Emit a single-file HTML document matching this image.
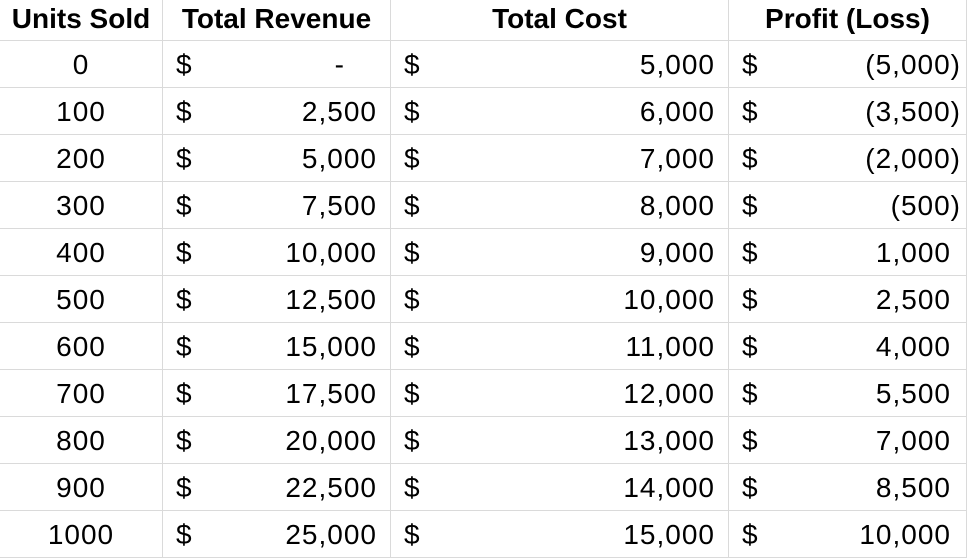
<!DOCTYPE html><html><head><style>
body{margin:0;width:967px;height:558px;background:#fff;overflow:hidden;position:relative;font-family:"Liberation Sans",sans-serif;font-size:28px;color:#000}
.v{position:absolute;top:0;width:1px;height:558px;background:#dadada}
.h{position:absolute;left:0;height:1px;width:967px;background:#dadada}
.t{position:absolute;white-space:nowrap;line-height:32px}
.n{letter-spacing:1px}
.b{font-weight:bold}
</style></head><body>
<div class="v" style="left:162px"></div><div class="v" style="left:390px"></div><div class="v" style="left:728px"></div><div class="v" style="left:966px"></div>
<div id="g"></div>
<div class="t b" style="left:0;width:162px;text-align:center;top:3px">Units Sold</div>
<div class="t b" style="left:163px;width:227px;text-align:center;top:3px">Total Revenue</div>
<div class="t b" style="left:391px;width:337px;text-align:center;top:3px">Total Cost</div>
<div class="t b" style="left:729px;width:237px;text-align:center;top:3px">Profit (Loss)</div>
<script>
var u=["0","100","200","300","400","500","600","700","800","900","1000"],
r=["-","2,500","5,000","7,500","10,000","12,500","15,000","17,500","20,000","22,500","25,000"],
c=["5,000","6,000","7,000","8,000","9,000","10,000","11,000","12,000","13,000","14,000","15,000"],
p=["(5,000)","(3,500)","(2,000)","(500)","1,000","2,500","4,000","5,500","7,000","8,500","10,000"],h="";
for(var i=0;i<=11;i++)h+='<div class="h" style="top:'+(40+47*i)+'px"></div>';
for(i=0;i<11;i++){var y=49+47*i;
h+='<div class="t n" style="left:0;width:162px;text-align:center;top:'+y+'px">'+u[i]+'</div>';
h+='<div class="t" style="left:176px;top:'+y+'px">$</div>';
h+='<div class="t n" style="right:'+(967-(i==0?345:377))+'px;top:'+y+'px">'+r[i]+'</div>';
h+='<div class="t" style="left:404px;top:'+y+'px">$</div>';
h+='<div class="t n" style="right:'+(967-715)+'px;top:'+y+'px">'+c[i]+'</div>';
h+='<div class="t" style="left:742px;top:'+y+'px">$</div>';
h+='<div class="t n" style="right:'+(967-(p[i][0]=="("?961:951))+'px;top:'+y+'px">'+p[i]+'</div>';}
document.getElementById("g").innerHTML=h;
</script>
</body></html>
